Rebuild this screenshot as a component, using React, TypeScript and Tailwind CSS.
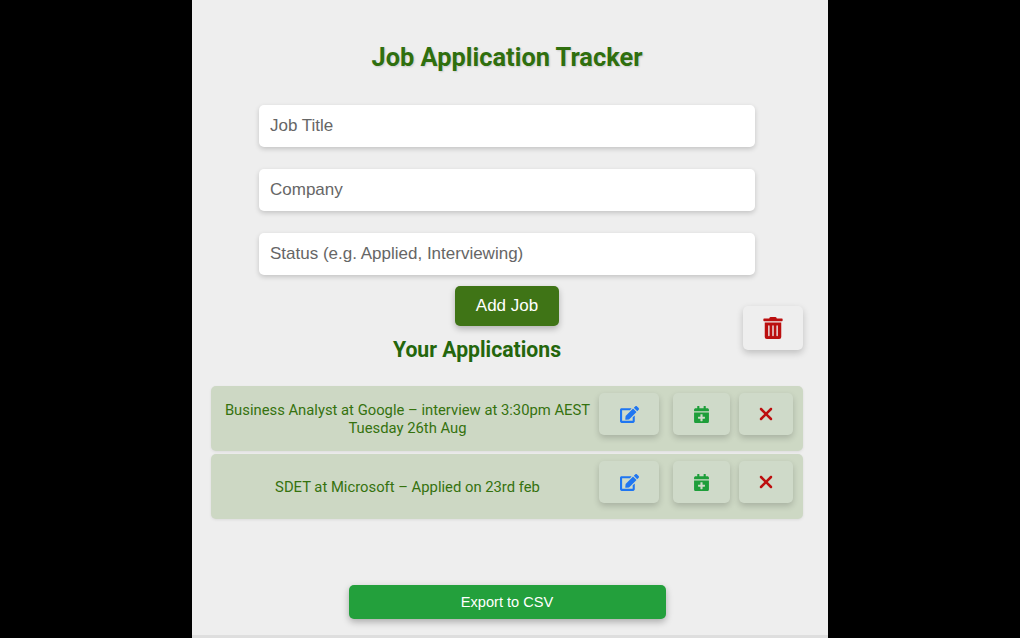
import { FaCalendarPlus, FaEdit, FaTrashAlt } from "react-icons/fa"
import { FaXmark } from "react-icons/fa6"

const jobs = [
  { id: 1, text: "Business Analyst at Google – interview at 3:30pm AEST Tuesday 26th Aug" },
  { id: 2, text: "SDET at Microsoft – Applied on 23rd feb" },
]

const fields = ["Job Title", "Company", "Status (e.g. Applied, Interviewing)"]

function RowButton({ width, children }: { width: string; children: React.ReactNode }) {
  return (
    <button className={`${width} flex h-[42px] shrink-0 items-center justify-center rounded-[5px] bg-[#cfdac9] shadow-[0_3px_6px_rgba(0,0,0,0.18)]`}>
      {children}
    </button>
  )
}

export default function App() {
  return (
    <div className="flex h-[638px] justify-center overflow-hidden bg-black font-['Roboto',sans-serif]">
      <div className="flex h-full w-[636px] flex-col items-center border-b-[3px] border-[#dedede] bg-[#eeeeee] pr-[6px]">
        <h1 className="mt-[43px] text-[25.4px] leading-[28px] font-bold text-[#2f6f0e] [text-shadow:1px_1px_2px_rgba(0,0,0,0.15)]">
          Job Application Tracker
        </h1>

        <div className="mt-[34px] flex flex-col gap-[22px]">
          {fields.map((field) => (
            <input
              key={field}
              placeholder={field}
              className="h-[42px] w-[496px] rounded-[5px] bg-white px-[11px] font-['Liberation_Sans',sans-serif] text-[17px] text-[#555555] shadow-[0_2px_5px_rgba(0,0,0,0.18)] outline-none placeholder:text-[#666666]"
            />
          ))}
        </div>

        <button className="mt-[11px] h-[40px] w-[104px] rounded-[5px] bg-[#3f7416] font-['Liberation_Sans',sans-serif] text-[17px] text-white shadow-[0_3px_6px_rgba(0,0,0,0.25)]">
          Add Job
        </button>

        <div className="flex w-[592px] items-start">
          <h2 className="mt-[12px] flex-1 text-center text-[21.2px] leading-[24px] font-bold text-[#24660c]">Your Applications</h2>
          <button className="-mt-[20px] flex h-[44px] w-[60px] items-center justify-center rounded-[5px] bg-[#eeeeee] shadow-[0_3px_7px_rgba(0,0,0,0.2)]">
            <FaTrashAlt className="h-[22px] w-[22px] text-[#bb0f0f]" />
          </button>
        </div>

        <ul className="mt-[24px] flex w-[592px] flex-col gap-[3px]">
          {jobs.map((job) => (
            <li key={job.id} className="flex h-[65px] items-center rounded-[5px] bg-[#cdd8c4] pr-[10px] pl-[5px] shadow-[0_1px_3px_rgba(0,0,0,0.08)]">
              <span className="flex-1 text-center text-[14.8px] leading-[18px] text-[#35720f]">{job.text}</span>
              <div className="mt-[7px] flex items-center gap-[9px] self-start">
                <div className="mr-[5px]">
                  <RowButton width="w-[60px]">
                    <FaEdit className="h-[19px] w-[19px] text-[#1f76f2]" />
                  </RowButton>
                </div>
                <RowButton width="w-[57px]">
                  <FaCalendarPlus className="h-[17px] w-[17px] text-[#1e9e3a]" />
                </RowButton>
                <RowButton width="w-[54px]">
                  <FaXmark className="h-[20px] w-[20px] text-[#bd0f0f]" />
                </RowButton>
              </div>
            </li>
          ))}
        </ul>

        <button className="mt-[66px] h-[34px] w-[317px] rounded-[5px] bg-[#23a03c] pt-[1px] font-['Liberation_Sans',sans-serif] text-[14.6px] text-white shadow-[0_3px_7px_rgba(0,0,0,0.28)]">
          Export to CSV
        </button>
      </div>
    </div>
  )
}
